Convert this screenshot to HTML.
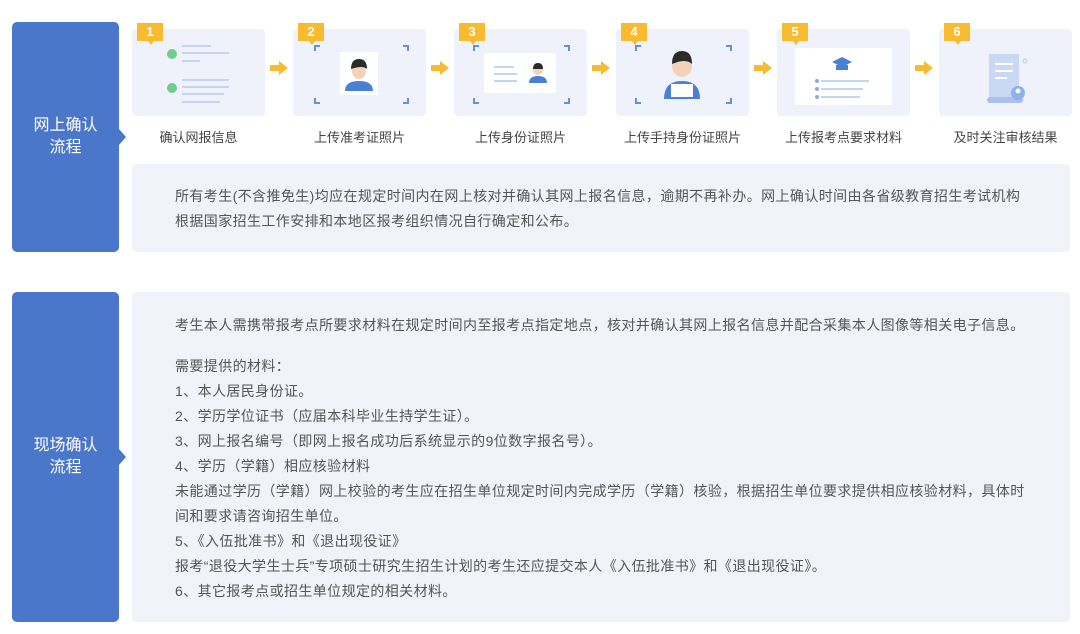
<!DOCTYPE html>
<html><head><meta charset="utf-8"><style>
*{margin:0;padding:0;box-sizing:border-box}
body{width:1080px;height:634px;background:#fff;font-family:"Liberation Sans","Noto Sans CJK SC",sans-serif;position:relative;overflow:hidden;color:#555}
.blk{position:absolute;left:12px;width:107px;background:#4a77c9;border-radius:5px;color:#fff;font-size:16px;line-height:22px;text-align:center;display:flex;align-items:center;justify-content:center}
.blk:after{content:"";position:absolute;right:-7px;top:50%;margin-top:-8px;border-left:7px solid #4a77c9;border-top:8px solid transparent;border-bottom:8px solid transparent}
.card{position:absolute;top:29px;width:133px;height:87px;background:#eff2fa;border-radius:4px}
.badge{position:absolute;top:23px;width:26px;height:18px;background:#f8bb2f;color:#fff;font-weight:bold;font-size:13px;text-align:center;line-height:18px}
.badge:after{content:"";position:absolute;left:11px;bottom:-4px;border-top:4px solid #f8bb2f;border-left:3px solid transparent;border-right:3px solid transparent}
.lbl{position:absolute;top:127px;width:133px;text-align:center;font-size:13px;color:#444}
.arr{position:absolute;top:61px;width:18px;height:14px}
.box{position:absolute;left:132px;width:938px;background:#f1f3f9;border-radius:4px;font-size:14px;letter-spacing:0.4px;color:#555}
</style></head><body>
<div class="blk" style="top:22px;height:230px">网上确认<br>流程</div>
<div class="blk" style="top:292px;height:330px">现场确认<br>流程</div>

<div class="card" style="left:132px">
 <svg width="133" height="87"><circle cx="40" cy="25" r="5" fill="#6fcf8a"/><circle cx="40" cy="59" r="5" fill="#6fcf8a"/>
 <g stroke="#c5d4f2" stroke-width="2"><line x1="50" y1="17" x2="79" y2="17"/><line x1="50" y1="24" x2="97" y2="24"/><line x1="50" y1="32" x2="68" y2="32"/><line x1="50" y1="51" x2="97" y2="51"/><line x1="50" y1="58" x2="97" y2="58"/><line x1="50" y1="65" x2="92" y2="65"/><line x1="50" y1="73" x2="88" y2="73"/></g></svg></div>
<div class="card" style="left:293px"><svg width="133" height="87"><g fill="none" stroke="#6b8fd6" stroke-width="2"><path d="M22 22V17h5M110 17h5v5M22 69v5h5M110 74h5v-5"/></g><rect x="47" y="23" width="38" height="43" fill="#fff"/><path d="M52 62q0-10 14-10t14 10z" fill="#4a7fd6"/><ellipse cx="66" cy="42" rx="7" ry="8" fill="#f3d2b8"/><path d="M58 40q0-10 8-10t8 10q-4-4-16 0z" fill="#2b2b2b"/></svg></div>
<div class="card" style="left:454px"><svg width="133" height="87"><g fill="none" stroke="#6b8fd6" stroke-width="2"><path d="M20 22V17h5M110 17h5v5M20 69v5h5M110 74h5v-5"/></g><rect x="30" y="24" width="72" height="40" fill="#fff"/><g stroke="#c5d4f2" stroke-width="2"><line x1="40" y1="38" x2="60" y2="38"/><line x1="40" y1="45" x2="63" y2="45"/><line x1="40" y1="52" x2="63" y2="52"/></g><path d="M75 54q0-7 9-7t9 7z" fill="#4a7fd6"/><circle cx="84" cy="41" r="5" fill="#f3d2b8"/><path d="M79 40q0-6 5-6t5 6z" fill="#2b2b2b"/></svg></div>
<div class="card" style="left:616px"><svg width="133" height="87"><g fill="none" stroke="#6b8fd6" stroke-width="2"><path d="M20 22V17h5M110 17h5v5M20 69v5h5M110 74h5v-5"/></g><path d="M48 70q0-18 18-18t18 18z" fill="#4a7fd6"/><ellipse cx="66" cy="37" rx="10" ry="11" fill="#f3d2b8"/><path d="M56 35q0-13 10-13t10 13q-6-6-20 0z" fill="#2b2b2b"/><rect x="55" y="55" width="22" height="13" fill="#fff"/></svg></div>
<div class="card" style="left:777px"><svg width="133" height="87"><rect x="18" y="19" width="97" height="57" fill="#fff"/><path d="M55 33l10-5 10 5-10 5z" fill="#4a7fd6"/><path d="M59 36v5h12v-5" fill="#4a7fd6"/><g stroke="#c5d4f2" stroke-width="2"><line x1="44" y1="52" x2="92" y2="52"/><line x1="44" y1="60" x2="86" y2="60"/><line x1="44" y1="68" x2="83" y2="68"/></g><g fill="#8fa9e0"><circle cx="40" cy="52" r="2"/><circle cx="40" cy="60" r="2"/><circle cx="40" cy="68" r="2"/></g></svg></div>
<div class="card" style="left:939px"><svg width="133" height="87"><path d="M50 25h30v44H50z" fill="#c9d8f4"/><rect x="48" y="68" width="36" height="6" rx="3" fill="#a9c0ee"/><g stroke="#fff" stroke-width="2"><line x1="56" y1="35" x2="74" y2="35"/><line x1="56" y1="42" x2="74" y2="42"/><line x1="56" y1="49" x2="68" y2="49"/></g><circle cx="79" cy="64" r="7" fill="#8fb0ec"/><circle cx="79" cy="62" r="2.5" fill="#fff"/><circle cx="86" cy="32" r="2" fill="none" stroke="#bcd" /></svg></div>

<div class="badge" style="left:137px">1</div><div class="badge" style="left:298px">2</div><div class="badge" style="left:459px">3</div><div class="badge" style="left:621px">4</div><div class="badge" style="left:782px">5</div><div class="badge" style="left:944px">6</div>

<svg class="arr" style="left:270px" viewBox="0 0 18 14"><path d="M0 4h9V0l9 7-9 7v-4H0z" fill="#f8bb2f"/></svg>
<svg class="arr" style="left:431px" viewBox="0 0 18 14"><path d="M0 4h9V0l9 7-9 7v-4H0z" fill="#f8bb2f"/></svg>
<svg class="arr" style="left:592px" viewBox="0 0 18 14"><path d="M0 4h9V0l9 7-9 7v-4H0z" fill="#f8bb2f"/></svg>
<svg class="arr" style="left:754px" viewBox="0 0 18 14"><path d="M0 4h9V0l9 7-9 7v-4H0z" fill="#f8bb2f"/></svg>
<svg class="arr" style="left:915px" viewBox="0 0 18 14"><path d="M0 4h9V0l9 7-9 7v-4H0z" fill="#f8bb2f"/></svg>

<div class="lbl" style="left:132px">确认网报信息</div>
<div class="lbl" style="left:293px">上传准考证照片</div>
<div class="lbl" style="left:454px">上传身份证照片</div>
<div class="lbl" style="left:616px">上传手持身份证照片</div>
<div class="lbl" style="left:777px">上传报考点要求材料</div>
<div class="lbl" style="left:939px">及时关注审核结果</div>

<div class="box" style="top:164px;height:88px;padding:20px 45px 0 43px;line-height:25px">所有考生(不含推免生)均应在规定时间内在网上核对并确认其网上报名信息，逾期不再补办。网上确认时间由各省级教育招生考试机构根据国家招生工作安排和本地区报考组织情况自行确定和公布。</div>

<div class="box" style="top:292px;height:330px;padding:21px 45px 0 43px;line-height:25px">
考生本人需携带报考点所要求材料在规定时间内至报考点指定地点，核对并确认其网上报名信息并配合采集本人图像等相关电子信息。<br>
<div style="height:16px"></div>
需要提供的材料：<br>
1、本人居民身份证。<br>
2、学历学位证书（应届本科毕业生持学生证）。<br>
3、网上报名编号（即网上报名成功后系统显示的9位数字报名号）。<br>
4、学历（学籍）相应核验材料<br>
未能通过学历（学籍）网上校验的考生应在招生单位规定时间内完成学历（学籍）核验，根据招生单位要求提供相应核验材料，具体时间和要求请咨询招生单位。<br>
5、《入伍批准书》和《退出现役证》<br>
报考“退役大学生士兵”专项硕士研究生招生计划的考生还应提交本人《入伍批准书》和《退出现役证》。<br>
6、其它报考点或招生单位规定的相关材料。
</div>
</body></html>
